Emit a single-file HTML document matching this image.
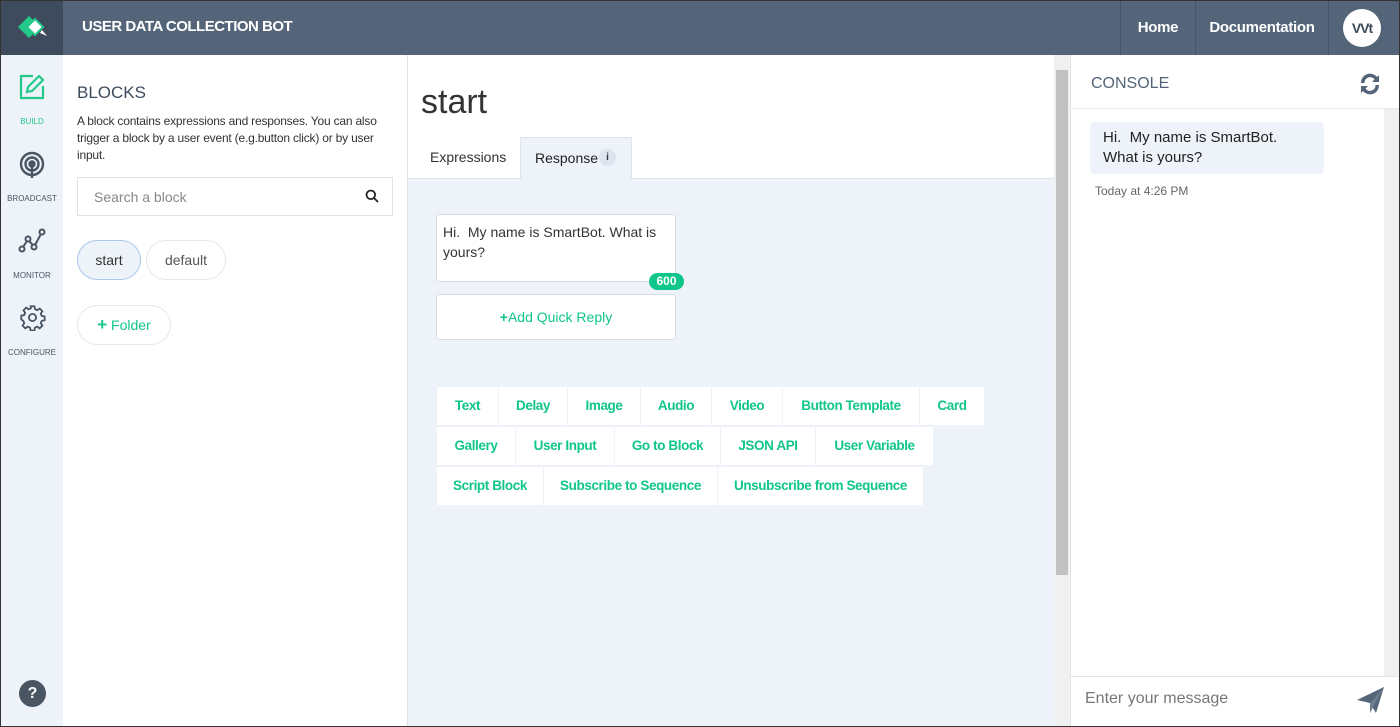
<!DOCTYPE html>
<html><head><meta charset="utf-8"><style>
*{box-sizing:border-box;margin:0;padding:0}
body{width:1400px;height:727px;overflow:hidden;font-family:"Liberation Sans",sans-serif;background:#fff;position:relative}
.a{position:absolute}
.frame{left:0;top:0;width:1400px;height:727px;border:1px solid #333;z-index:50;pointer-events:none}
.hdr{left:0;top:0;width:1400px;height:55px;background:#546579}
.logo{left:0;top:0;width:63px;height:55px;background:#3e4b5c}
.ttl{left:82px;top:18px;color:#fff;font-weight:bold;font-size:15px;letter-spacing:-0.5px}
.nav{color:#fff;font-weight:bold;font-size:15px;top:0;height:55px;line-height:55px;text-align:center;border-left:1px solid #46566a;letter-spacing:-0.3px}
.side{left:1px;top:55px;width:62px;height:671px;background:#eef3f9}
.sl{font-size:8px;color:#4a5563;width:62px;text-align:center;left:1px}
.btn{position:absolute;background:#fff;color:#10c68b;font-size:13.5px;font-weight:bold;text-align:center;line-height:38px;height:38px;letter-spacing:-0.4px}
</style></head><body>
<div class="a hdr"></div>
<div class="a logo"><svg class="a" style="left:16px;top:13px" width="32" height="28" viewBox="0 0 32 28"><path d="M2 14 L13 3 L24 14 L13 25Z" fill="#22c98a"/><path d="M11 14 L19 6 L27 14 L19 22Z" fill="#fff" stroke="#22c98a" stroke-width="2"/><path d="M24 20 L31 23 L26 17Z" fill="#fff"/></svg></div>
<div class="a ttl">USER DATA COLLECTION BOT</div>
<div class="a nav" style="left:1120px;width:75px">Home</div>
<div class="a nav" style="left:1195px;width:133px">Documentation</div>
<div class="a nav" style="left:1328px;width:72px"></div>
<div class="a" style="left:1343px;top:9px;width:38px;height:38px;border-radius:50%;background:#fff;color:#3e4b5c;font-size:14px;font-weight:bold;line-height:38px;text-align:center;letter-spacing:-1px">VVt</div>

<div class="a side"></div>
<svg class="a" style="left:19px;top:73px" width="27" height="27" viewBox="0 0 27 27" fill="none" stroke="#22c98a" stroke-width="2.2"><path d="M14 3H2v22h22V13"/><path d="M8 19l1-5L20 3l4 4L13 18z"/></svg>
<div class="a sl" style="top:117px;color:#22c98a">BUILD</div>
<svg class="a" style="left:19px;top:151px" width="26" height="28" viewBox="0 0 26 28" fill="none" stroke="#4a5563" stroke-width="2.4"><circle cx="13" cy="13" r="11"/><circle cx="13" cy="13" r="6.5"/><circle cx="13" cy="13" r="2.5" fill="#4a5563"/><path d="M13 15v12"/></svg>
<div class="a sl" style="top:194px">BROADCAST</div>
<svg class="a" style="left:18px;top:228px" width="28" height="26" viewBox="0 0 28 26" fill="none" stroke="#4a5563" stroke-width="2"><circle cx="4" cy="21" r="2.5"/><circle cx="10" cy="11" r="2.5"/><circle cx="16" cy="19" r="2.5"/><circle cx="24" cy="4" r="2.5"/><path d="M5 19l4-6M11 13l4 4M17 17l6-11"/></svg>
<div class="a sl" style="top:271px">MONITOR</div>
<svg class="a" style="left:19px;top:304px" width="27" height="27" viewBox="0 0 24 24" fill="none" stroke="#4a5563" stroke-width="1.6"><circle cx="12" cy="12" r="3.2"/><path d="M10.3 2h3.4l.5 2.6 2 .9 2.2-1.5 2.4 2.4-1.5 2.2.9 2 2.6.5v3.4l-2.6.5-.9 2 1.5 2.2-2.4 2.4-2.2-1.5-2 .9-.5 2.6h-3.4l-.5-2.6-2-.9-2.2 1.5-2.4-2.4 1.5-2.2-.9-2L2 13.7v-3.4l2.6-.5.9-2L4 5.6 6.4 3.2l2.2 1.5 2-.9z"/></svg>
<div class="a sl" style="top:348px">CONFIGURE</div>
<div class="a" style="left:19px;top:680px;width:27px;height:27px;border-radius:50%;background:#4a5563;color:#fff;font-weight:bold;font-size:16px;text-align:center;line-height:27px">?</div>

<div class="a" style="left:77px;top:83px;font-size:17px;color:#3e4b5c">BLOCKS</div>
<div class="a" style="left:77px;top:113px;width:320px;font-size:12px;line-height:17px;color:#333;letter-spacing:-0.2px">A block contains expressions and responses. You can also trigger a block by a user event (e.g.button click) or by user input.</div>
<div class="a" style="left:77px;top:177px;width:316px;height:39px;border:1px solid #dde4ee"></div>
<div class="a" style="left:94px;top:189px;font-size:14px;color:#888">Search a block</div>
<svg class="a" style="left:365px;top:189px" width="14" height="14" viewBox="0 0 14 14" fill="none" stroke="#222" stroke-width="1.8"><circle cx="5.8" cy="5.8" r="4.3"/><path d="M9 9l4 4"/></svg>
<div class="a" style="left:77px;top:240px;width:64px;height:40px;border-radius:20px;background:#eef3f9;border:1px solid #a9c9ec;font-size:14px;color:#333;text-align:center;line-height:38px">start</div>
<div class="a" style="left:146px;top:240px;width:80px;height:40px;border-radius:20px;border:1px solid #e2e8ef;font-size:14px;color:#555;text-align:center;line-height:38px">default</div>
<div class="a" style="left:77px;top:305px;width:94px;height:40px;border-radius:20px;border:1px solid #e2e8ef;font-size:14px;color:#10c68b;text-align:center;line-height:38px"><b style="font-size:17px">+</b> Folder</div>
<div class="a" style="left:407px;top:55px;width:1px;height:671px;background:#dde4ee"></div>

<div class="a" style="left:408px;top:178px;width:646px;height:548px;background:#eef3f9;border-top:1px solid #dde4ee"></div>
<div class="a" style="left:421px;top:83px;font-size:34px;color:#333">start</div>
<div class="a" style="left:430px;top:149px;font-size:14px;color:#333">Expressions</div>
<div class="a" style="left:520px;top:137px;width:112px;height:42px;background:#eef3f9;border:1px solid #dde4ee;border-bottom:none"></div>
<div class="a" style="left:535px;top:150px;font-size:14px;color:#222">Response</div>
<div class="a" style="left:599px;top:149px;width:17px;height:17px;border-radius:50%;background:#dde4ee;font-size:10px;font-weight:bold;text-align:center;line-height:17px;color:#333">i</div>
<div class="a" style="left:436px;top:214px;width:240px;height:68px;background:#fff;border:1px solid #d6dde6;border-radius:3px;padding:7px 6px;font-size:14px;line-height:20px;color:#333">Hi.&nbsp; My name is SmartBot. What is yours?</div>
<div class="a" style="left:649px;top:273px;width:35px;height:17px;border-radius:9px;background:#10c68b;color:#fff;font-size:12px;font-weight:bold;text-align:center;line-height:17px">600</div>
<div class="a" style="left:436px;top:294px;width:240px;height:46px;background:#fff;border:1px solid #d6dde6;border-radius:3px;color:#10c68b;font-size:14px;text-align:center;line-height:44px"><b>+</b>Add Quick Reply</div>

<div class="btn" style="left:437px;top:387px;width:61px">Text</div>
<div class="btn" style="left:499px;top:387px;width:68px">Delay</div>
<div class="btn" style="left:568px;top:387px;width:72px">Image</div>
<div class="btn" style="left:641px;top:387px;width:70px">Audio</div>
<div class="btn" style="left:712px;top:387px;width:70px">Video</div>
<div class="btn" style="left:783px;top:387px;width:136px">Button Template</div>
<div class="btn" style="left:920px;top:387px;width:64px">Card</div>
<div class="btn" style="left:437px;top:427px;width:78px">Gallery</div>
<div class="btn" style="left:516px;top:427px;width:98px">User Input</div>
<div class="btn" style="left:615px;top:427px;width:105px">Go to Block</div>
<div class="btn" style="left:721px;top:427px;width:94px">JSON API</div>
<div class="btn" style="left:816px;top:427px;width:117px">User Variable</div>
<div class="btn" style="left:437px;top:467px;width:106px">Script Block</div>
<div class="btn" style="left:544px;top:467px;width:173px">Subscribe to Sequence</div>
<div class="btn" style="left:718px;top:467px;width:205px">Unsubscribe from Sequence</div>

<div class="a" style="left:1054px;top:55px;width:16px;height:671px;background:#f0f0f0"></div>
<div class="a" style="left:1056px;top:70px;width:12px;height:505px;background:#c1c1c1"></div>
<div class="a" style="left:1070px;top:55px;width:1px;height:671px;background:#dde4ee"></div>

<div class="a" style="left:1091px;top:75px;font-size:16px;color:#546579">CONSOLE</div>
<svg class="a" style="left:1358px;top:72px" width="24" height="24" viewBox="0 0 24 24" fill="#546579"><path d="M3 11A9 9 0 0 1 19 5l2-2v7h-7l2.5-2.5A5.5 5.5 0 0 0 6.5 11z"/><path d="M21 13A9 9 0 0 1 5 19l-2 2v-7h7l-2.5 2.5A5.5 5.5 0 0 0 17.5 13z"/></svg>
<div class="a" style="left:1071px;top:108px;width:328px;height:1px;background:#e6ebf1"></div>
<div class="a" style="left:1384px;top:109px;width:15px;height:568px;background:#f0f0f0"></div>
<div class="a" style="left:1090px;top:122px;width:234px;height:52px;background:#eef3f9;border-radius:4px;padding:6px 13px;font-size:15px;line-height:20px;color:#222">Hi.&nbsp; My name is SmartBot.<br>What is yours?</div>
<div class="a" style="left:1095px;top:184px;font-size:12px;color:#666">Today at 4:26 PM</div>
<div class="a" style="left:1071px;top:676px;width:328px;height:1px;background:#dde4ee"></div>
<div class="a" style="left:1085px;top:690px;font-size:16px;color:#777">Enter your message</div>
<svg class="a" style="left:1357px;top:687px" width="27" height="26" viewBox="0 0 27 26" fill="#546579"><path d="M0 13L27 0 19 26 13 16z"/><path d="M13 16 27 0 13 26z" fill="#6b7c8f"/></svg>
<div class="a frame"></div>
</body></html>
